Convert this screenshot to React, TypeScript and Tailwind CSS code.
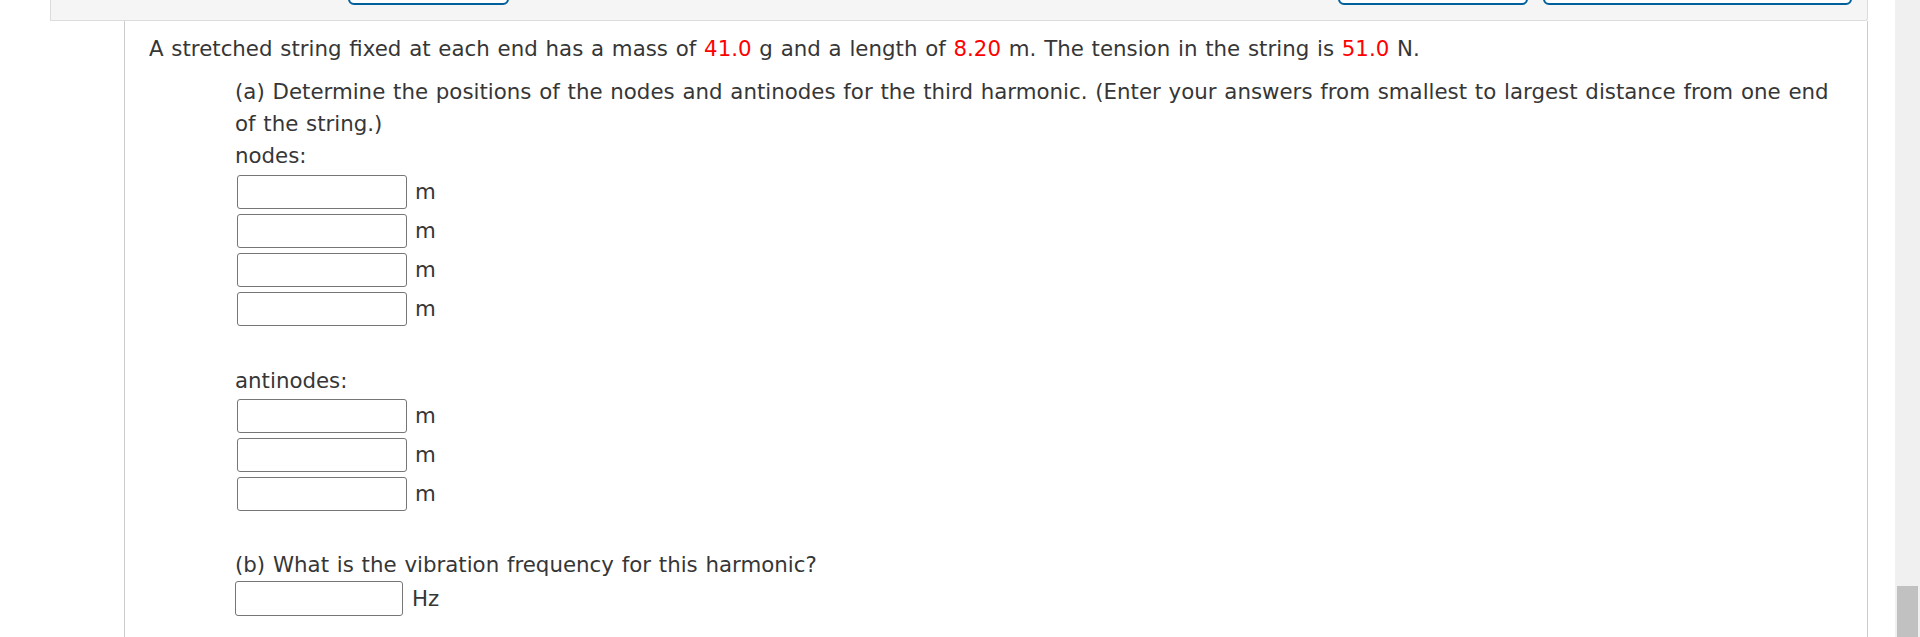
const nodeRows = [0, 1, 2, 3];
const antinodeRows = [0, 1, 2];

const AnswerRow = ({ unit }: { unit: string }) => (
  <div className="flex h-[34px] items-center">
    <input
      type="text"
      className="ml-[2px] h-[34px] w-[170px] rounded-[3px] border border-[#767676] bg-white outline-none"
    />
    <span className="ml-[8px]">{unit}</span>
  </div>
);

export default function App() {
  return (
    <div
      className="flex h-[637px] w-[1920px] overflow-hidden bg-white text-[21.33px] leading-[32px] text-[#363636] [word-spacing:1px]"
      style={{ fontFamily: '"DejaVu Sans", Verdana, sans-serif' }}
    >
      <div className="flex flex-1 flex-col pl-[50px] pr-[27px]">
        {/* toolbar strip, mostly scrolled out of view */}
        <div className="flex h-[21px] shrink-0 items-end overflow-hidden rounded-br-[3px] border-b border-l border-r border-[#dcdcdc] bg-[#f5f5f5] pr-[15px]">
          <button
            type="button"
            className="mb-[15px] ml-[297px] h-[40px] w-[161px] shrink-0 rounded-[6px] border-2 border-[#00609c] bg-white"
          />
          <div className="ml-auto flex gap-[15px]">
            <button
              type="button"
              className="mb-[15px] h-[40px] w-[190px] shrink-0 rounded-[6px] border-2 border-[#00609c] bg-white"
            />
            <button
              type="button"
              className="mb-[15px] h-[40px] w-[309px] shrink-0 rounded-[6px] border-2 border-[#00609c] bg-white"
            />
          </div>
        </div>

        <div className="ml-[74px] flex-1 border-l border-r border-[#cccccc] pl-[24px] pr-[24px] pt-[12px]">
          <p>
            A stretched string fixed at each end has a mass of <span className="text-[#ff0000]">41.0</span> g and a
            length of <span className="text-[#ff0000]">8.20</span> m. The tension in the string is{" "}
            <span className="text-[#ff0000]">51.0</span> N.
          </p>

          <div className="ml-[86px] mt-[11px]">
            <p>
              (a) Determine the positions of the nodes and antinodes for the third harmonic. (Enter your answers from
              smallest to largest distance from one end of the string.)
            </p>
            <p>nodes:</p>
            <div className="mt-[3px] flex flex-col gap-[5px]">
              {nodeRows.map((i) => (
                <AnswerRow key={i} unit="m" />
              ))}
            </div>

            <p className="mt-[39px]">antinodes:</p>
            <div className="mt-[2px] flex flex-col gap-[5px]">
              {antinodeRows.map((i) => (
                <AnswerRow key={i} unit="m" />
              ))}
            </div>

            <p className="mt-[38px]">(b) What is the vibration frequency for this harmonic?</p>
            <div className="flex h-[35px] items-center">
              <input
                type="text"
                className="h-[35px] w-[168px] rounded-[3px] border border-[#767676] bg-white outline-none"
              />
              <span className="ml-[9px]">Hz</span>
            </div>
          </div>
        </div>
      </div>

      {/* scrollbar */}
      <div className="flex w-[25px] shrink-0 flex-col justify-end bg-[#f0f0f0]">
        <div className="mx-[2px] h-[51px] bg-[#c1c1c1]" />
      </div>
    </div>
  );
}
